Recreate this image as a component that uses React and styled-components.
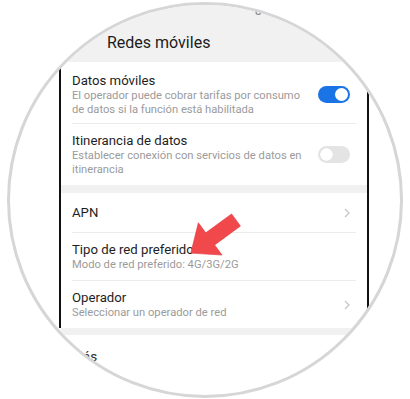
import styled, { createGlobalStyle } from "styled-components";

const GlobalStyle = createGlobalStyle`
  html, body {
    margin: 0;
    padding: 0;
    background: #ffffff;
  }
  body {
    font-family: Roboto, "Noto Sans", "Liberation Sans", sans-serif;
  }
`;

const Page = styled.div`
  position: relative;
  width: 410px;
  height: 399px;
  padding: 2px 0 0 7px;
  box-sizing: border-box;
  background: #ffffff;
  overflow: hidden;
`;

const Lens = styled.div`
  width: 396px;
  height: 396px;
  box-sizing: border-box;
  border: 3px solid #d6d6d6;
  border-radius: 50%;
  overflow: hidden;
  background: #ffffff;
  display: flex;
  flex-direction: column;
`;

const Header = styled.div`
  height: 57px;
  flex-shrink: 0;
  background: #f1f1f1;
  display: flex;
  flex-direction: column;
`;

const StatusBar = styled.div`
  height: 20px;
  padding-left: 245px;
  display: flex;
  align-items: flex-start;
  padding-top: 2px;
  box-sizing: border-box;
  font-size: 9px;
  font-weight: 700;
  color: #8a8a8a;
`;

const TitleBar = styled.div`
  flex: 1;
  display: flex;
  align-items: center;
  padding: 0 0 2px 58px;
  gap: 23px;
`;

const BackIcon = styled.svg`
  width: 16px;
  height: 16px;
  margin-top: 9px;
  flex-shrink: 0;
`;

const Title = styled.h1`
  margin: 0;
  font-size: 16px;
  line-height: 20px;
  font-weight: 400;
  color: #1c1c1c;
`;

const Card = styled.div`
  position: relative;
  margin: 5px 0 0 49px;
  width: 310px;
  box-sizing: border-box;
  border-left: 2px solid #111111;
  padding-right: 2px;

  &::after {
    content: "";
    position: absolute;
    right: 0;
    top: 0;
    bottom: 18px;
    width: 2px;
    background: #111111;
  }
`;

const Row = styled.div`
  margin: 0 11px;
  padding: ${(p) => p.$pad || "8px 6px 8px 0"};
  display: flex;
  align-items: center;
  justify-content: space-between;
  gap: 12px;
  border-bottom: ${(p) => (p.$divider ? "1px solid #ebebeb" : "none")};
`;

const TextBlock = styled.div`
  display: flex;
  flex-direction: column;
`;

const ItemTitle = styled.div`
  font-size: 13.2px;
  line-height: 17px;
  color: #1e1e1e;
  white-space: nowrap;
`;

const ItemDesc = styled.div`
  font-size: 11.2px;
  line-height: 14px;
  color: #9b9b9b;
  white-space: nowrap;
`;

const Band = styled.div`
  height: ${(p) => p.$h}px;
  background: #f1f1f1;
`;

const BottomBand = styled(Band)`
  margin-left: 51px;
  width: 306px;
`;

const Toggle = styled.div`
  width: 32px;
  height: 17px;
  flex-shrink: 0;
  border-radius: 9px;
  box-sizing: border-box;
  padding: 2px;
  display: flex;
  justify-content: ${(p) => (p.$on ? "flex-end" : "flex-start")};
  background: ${(p) => (p.$on ? "#1b74e6" : "#e4e4e4")};

  &::before {
    content: "";
    width: 13px;
    height: 13px;
    border-radius: 50%;
    background: #ffffff;
    box-shadow: ${(p) => (p.$on ? "none" : "0 0 1px rgba(0,0,0,0.15)")};
  }
`;

const Chevron = styled.svg`
  width: 6px;
  height: 10px;
  flex-shrink: 0;
`;

const MoreRow = styled.div`
  padding: 13px 0 0 61px;
  font-size: 13.5px;
  line-height: 17px;
  color: #2a2a2a;
`;

const Pointer = styled.svg`
  position: absolute;
  left: 180px;
  top: 205px;
  width: 70px;
  height: 60px;
  pointer-events: none;
`;

function ChevronIcon() {
  return (
    <Chevron viewBox="0 0 6 10">
      <polyline points="1,1 5,5 1,9" fill="none" stroke="#c6c6c6" strokeWidth="1.3" />
    </Chevron>
  );
}

function SettingRow({ title, desc, control, divider, pad }) {
  return (
    <Row $divider={divider} $pad={pad}>
      <TextBlock>
        <ItemTitle>{title}</ItemTitle>
        {desc && <ItemDesc>{desc}</ItemDesc>}
      </TextBlock>
      {control}
    </Row>
  );
}

export default function App() {
  return (
    <>
      <GlobalStyle />
      <Page>
        <Lens>
          <Header>
            <StatusBar>G</StatusBar>
            <TitleBar>
              <BackIcon viewBox="0 0 16 16">
                <path d="M15 8H2M7 3L2 8l5 5" fill="none" stroke="#333" strokeWidth="1.6" />
              </BackIcon>
              <Title>Redes móviles</Title>
            </TitleBar>
          </Header>

          <Card>
            <SettingRow
              pad="5px 6px 6px 0"
              divider
              title="Datos móviles"
              desc={<>El operador puede cobrar tarifas por consumo<br />de datos si la función está habilitada</>}
              control={<Toggle $on />}
            />
            <SettingRow
              title="Itinerancia de datos"
              desc={<>Establecer conexión con servicios de datos en<br />itinerancia</>}
              control={<Toggle />}
            />
            <Band $h={8} />
            <SettingRow
              pad="11px 6px 11px 0"
              divider
              title="APN"
              control={<ChevronIcon />}
            />
            <SettingRow
              divider
              title="Tipo de red preferido"
              desc="Modo de red preferido: 4G/3G/2G"
            />
            <SettingRow
              title="Operador"
              desc="Seleccionar un operador de red"
              control={<ChevronIcon />}
            />
          </Card>
          <BottomBand $h={7} />
          <MoreRow>Más</MoreRow>
        </Lens>

        <Pointer viewBox="180 205 70 60">
          <g transform="translate(236 220) rotate(143.75)">
            <polygon
              points="0,-7.5 32,-7.5 32,-20 56,0 32,20 32,7.5 0,7.5"
              fill="#f1484c"
              stroke="#e23c41"
              strokeWidth="0.6"
              strokeLinejoin="round"
            />
          </g>
        </Pointer>
      </Page>
    </>
  );
}
